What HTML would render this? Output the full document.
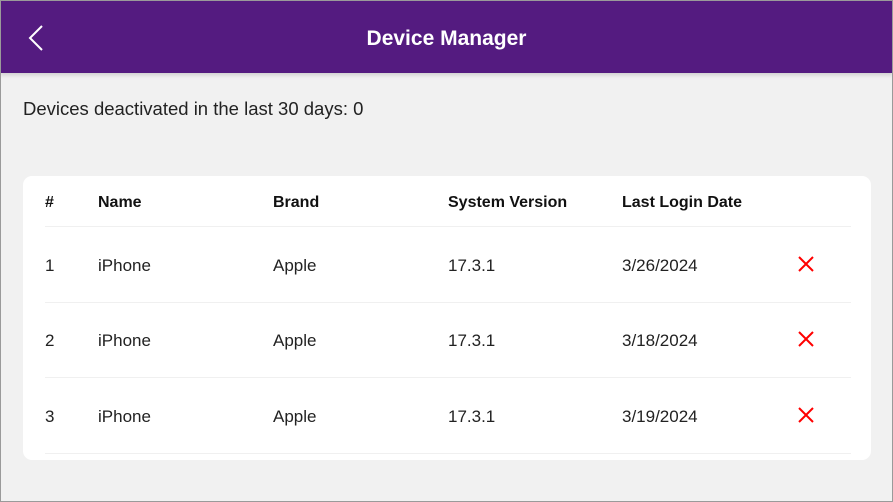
<!DOCTYPE html>
<html><head><meta charset="utf-8"><style>
*{margin:0;padding:0;box-sizing:border-box}
html,body{width:893px;height:502px;overflow:hidden}
body{background:#f1f1f1;font-family:"Liberation Sans",sans-serif;color:#222;position:relative}
.frame{position:absolute;inset:0;border:1px solid #9a9a9a;pointer-events:none;z-index:5}
.hdr{position:absolute;left:0;top:0;width:893px;height:73px;background:#541b80;box-shadow:0 2px 4px rgba(0,0,0,.15)}
.hdr h1{position:absolute;left:0;right:0;top:27px;text-align:center;color:#fff;font-size:21px;font-weight:bold}
.back{position:absolute;left:27px;top:24px}
.info{position:absolute;left:23px;top:98px;font-size:18.5px;color:#222}
.card{position:absolute;left:23px;top:176px;width:848px;height:284px;background:#fff;border-radius:9px}
.row{position:absolute;left:22px;width:806px;border-bottom:1px solid #f0f0f0;font-size:17px}
.row span{position:absolute}
.h{font-size:16px}
.h span{font-weight:bold;color:#111}
.x{position:absolute;left:752px}
</style></head><body>
<div class="frame"></div>
<div class="hdr">
<svg class="back" width="18" height="28" viewBox="0 0 18 28"><path d="M15 2 L3 14 L15 26" fill="none" stroke="#fff" stroke-width="2"/></svg>
<h1>Device Manager</h1>
</div>
<div class="info">Devices deactivated in the last 30 days: 0</div>
<div class="card">
<div class="row h" style="top:0;height:51px"><span style="left:0;top:18px">#</span><span style="left:53px;top:18px">Name</span><span style="left:228px;top:18px">Brand</span><span style="left:403px;top:18px">System Version</span><span style="left:577px;top:18px">Last Login Date</span></div>
<div class="row" style="top:51px;height:76px"><span style="left:0;top:29px">1</span><span style="left:53px;top:29px">iPhone</span><span style="left:228px;top:29px">Apple</span><span style="left:403px;top:29px">17.3.1</span><span style="left:577px;top:29px">3/26/2024</span><svg class="x" style="top:28px" width="18" height="18" viewBox="0 0 18 18"><path d="M2 2L16 16M16 2L2 16" stroke="#f00" stroke-width="2"/></svg></div>
<div class="row" style="top:127px;height:75px"><span style="left:0;top:28px">2</span><span style="left:53px;top:28px">iPhone</span><span style="left:228px;top:28px">Apple</span><span style="left:403px;top:28px">17.3.1</span><span style="left:577px;top:28px">3/18/2024</span><svg class="x" style="top:27px" width="18" height="18" viewBox="0 0 18 18"><path d="M2 2L16 16M16 2L2 16" stroke="#f00" stroke-width="2"/></svg></div>
<div class="row" style="top:202px;height:76px"><span style="left:0;top:29px">3</span><span style="left:53px;top:29px">iPhone</span><span style="left:228px;top:29px">Apple</span><span style="left:403px;top:29px">17.3.1</span><span style="left:577px;top:29px">3/19/2024</span><svg class="x" style="top:28px" width="18" height="18" viewBox="0 0 18 18"><path d="M2 2L16 16M16 2L2 16" stroke="#f00" stroke-width="2"/></svg></div>
</div>
</body></html>
